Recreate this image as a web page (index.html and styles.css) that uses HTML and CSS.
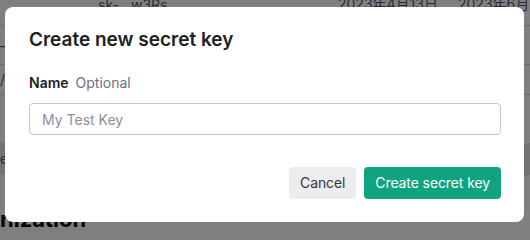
FILE: index.html
```html
<!DOCTYPE html>
<html lang="en">
<head>
<meta charset="utf-8">
<title>Create new secret key</title>
<link rel="stylesheet" href="styles.css">
</head>
<body>
<div class="page">
  <div class="keys">
    <div class="row row-top">
      <span class="cell c-name"></span>
      <span class="cell c-key">sk-...w3Rs</span>
      <span class="cell c-date">2023年4月13日</span>
      <span class="cell c-used">2023年6月</span>
    </div>
    <div class="row row-mid">
      <span class="cell c-name">—</span>
      <span class="cell c-key"></span>
      <span class="cell c-date"></span>
      <span class="cell c-used">日</span>
    </div>
    <div class="row row-small">
      <span class="cell c-name">/</span>
      <span class="cell c-key"></span>
      <span class="cell c-date"></span>
      <span class="cell c-used">日</span>
    </div>
  </div>
  <div class="band">e</div>
  <h2 class="section">nization</h2>
</div>

<div class="overlay">
  <div class="modal" role="dialog" aria-labelledby="dlg-title">
    <h1 class="modal-title" id="dlg-title">Create new secret key</h1>
    <div class="field">
      <label class="field-label" for="key-name"><span class="label-main">Name</span><span class="label-hint">Optional</span></label>
      <input class="text-input" id="key-name" type="text" placeholder="My Test Key">
    </div>
    <div class="actions">
      <button class="btn btn-neutral" type="button">Cancel</button>
      <button class="btn btn-primary" type="button">Create secret key</button>
    </div>
  </div>
</div>
</body>
</html>
```

FILE: styles.css
```css
* { box-sizing: border-box; }

html, body {
  margin: 0;
  padding: 0;
  width: 530px;
  height: 230px;
  overflow: hidden;
  background: #ffffff;
  font-family: "Inter", "Noto Sans", "Noto Sans CJK SC", sans-serif;
  color: #353740;
}

/* ---------- page behind the dialog ---------- */
.page {
  margin-top: -14px;
}

.keys { display: flex; flex-direction: column; }

.row {
  display: flex;
  align-items: center;
  border-bottom: 1px solid #d9d9e3;
  font-size: 14px;
  color: #565869;
}
.row-top { height: 40px; align-items: flex-end; padding-bottom: 12px; }
.row-mid { height: 39px; }
.row-small { height: 30px; }

.cell { display: block; white-space: nowrap; overflow: hidden; }
.c-name { width: 98px; padding-left: 0; }
.c-key { width: 240px; }
.c-date { width: 120px; }
.c-used { flex: 1; }

.band {
  margin-top: 48px;
  height: 32px;
  line-height: 32px;
  background: #e6e6ea;
  font-size: 14px;
  color: #565869;
  padding-left: 0;
}

.section {
  margin: 30px 0 0 0;
  font-size: 22px;
  font-weight: 700;
  line-height: 28px;
  color: #000000;
}

/* ---------- overlay + dialog ---------- */
.overlay {
  position: fixed;
  inset: 0;
  background: rgba(0, 0, 0, 0.5);
  padding: 7px 0 0 5px;
}

.modal {
  width: 519px;
  background: #ffffff;
  border-radius: 8px;
  padding: 19px 23px 23px 24px;
  display: flex;
  flex-direction: column;
}

.modal-title {
  margin: 0;
  font-size: 19px;
  line-height: 28px;
  font-weight: 600;
  color: #202123;
}

.field {
  margin-top: 19px;
  display: flex;
  flex-direction: column;
  gap: 10px;
}

.field-label {
  font-size: 14px;
  line-height: 20px;
  display: flex;
  gap: 7px;
}
.label-main { font-weight: 600; color: #202123; }
.label-hint { color: #6e6e80; }

.text-input {
  height: 32px;
  width: 100%;
  border: 1px solid #c5c5d2;
  border-radius: 4px;
  padding: 0 12px;
  font-family: inherit;
  font-size: 14px;
  color: #353740;
  background: #ffffff;
  outline: none;
}
.text-input::placeholder { color: #8e8ea0; }

.actions {
  margin-top: 32px;
  display: flex;
  justify-content: flex-end;
  gap: 8px;
}

.btn {
  height: 32px;
  border: none;
  border-radius: 4px;
  padding: 0 11px;
  font-family: inherit;
  font-size: 14px;
  line-height: 32px;
  letter-spacing: -0.1px;
  cursor: pointer;
}
.btn-neutral { background: #ececf1; color: #353740; }
.btn-primary { background: #10a37f; color: #ffffff; }
```
